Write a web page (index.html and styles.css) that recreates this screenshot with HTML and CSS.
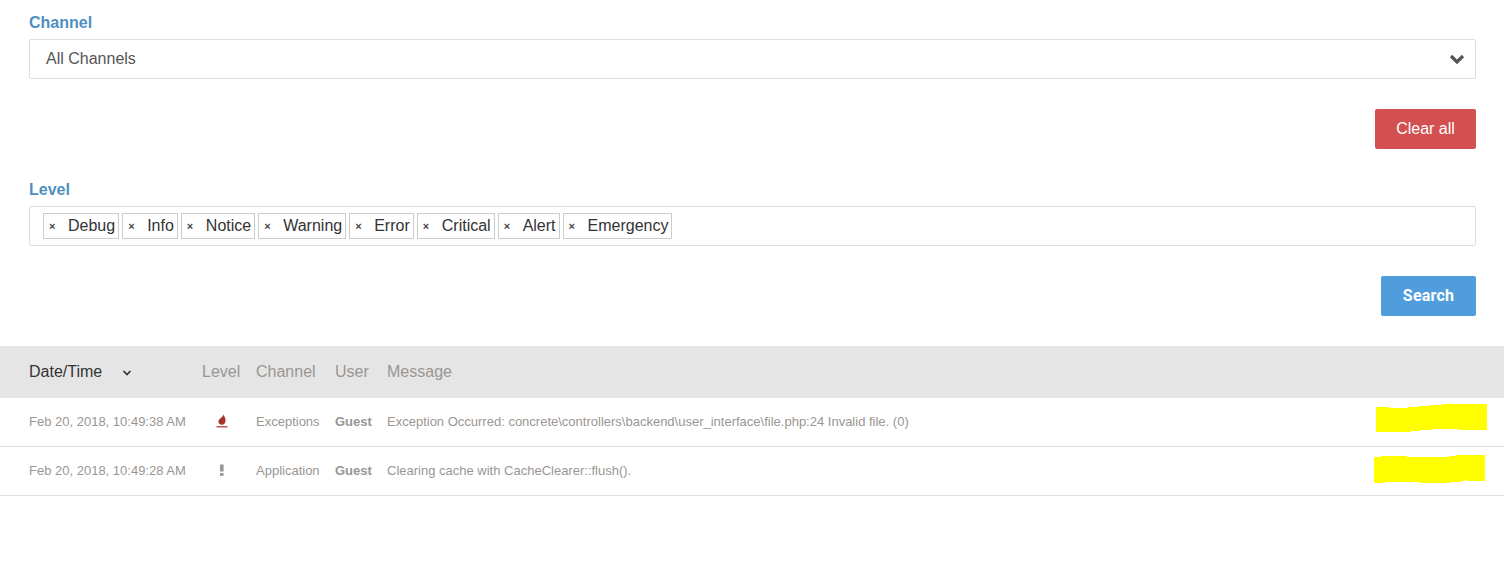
FILE: index.html
```html
<!DOCTYPE html>
<html lang="en">
<head>
    <meta charset="UTF-8">
    <meta name="viewport" content="width=device-width, initial-scale=1.0">
    <title>Logs</title>
    <link rel="stylesheet" href="styles.css">
</head>
<body>
    <div class="filters">
        <div class="field-label">Channel</div>
        <div class="select-box">
            <span>All Channels</span>
            <svg class="select-arrow" width="16" height="12" viewBox="0 0 16 12">
                <path d="M2 3 L8 9 L14 3" fill="none" stroke="#555" stroke-width="3.2"/>
            </svg>
        </div>
        <div class="button-row">
            <button class="btn btn-clear">Clear all</button>
        </div>

        <div class="field-label">Level</div>
        <div class="tag-box">
            <span class="tag"><span class="tag-x">×</span>Debug</span>
            <span class="tag"><span class="tag-x">×</span>Info</span>
            <span class="tag"><span class="tag-x">×</span>Notice</span>
            <span class="tag"><span class="tag-x">×</span>Warning</span>
            <span class="tag"><span class="tag-x">×</span>Error</span>
            <span class="tag"><span class="tag-x">×</span>Critical</span>
            <span class="tag"><span class="tag-x">×</span>Alert</span>
            <span class="tag"><span class="tag-x">×</span>Emergency</span>
        </div>
        <div class="button-row">
            <button class="btn btn-search">Search</button>
        </div>
    </div>

    <div class="log-table">
        <div class="log-row log-head">
            <div class="sort-col">Date/Time
                <svg class="sort-arrow" width="10" height="8" viewBox="0 0 10 8">
                    <path d="M1.5 2 L5 5.5 L8.5 2" fill="none" stroke="#333" stroke-width="1.7"/>
                </svg>
            </div>
            <div>Level</div>
            <div>Channel</div>
            <div>User</div>
            <div>Message</div>
        </div>
        <div class="log-row">
            <div>Feb 20, 2018, 10:49:38 AM</div>
            <div class="level-icon">
                <svg width="12" height="14" viewBox="0 0 12 14">
                    <path d="M7.6 0.5 C7.8 2.4 9.6 3.6 9.6 6.4 C9.6 9 7.9 10.8 5.8 10.8 C3.8 10.8 2.4 9.4 2.4 7.6 C2.4 5.8 3.8 5.2 4.8 4 C5.8 3 7.2 2 7.6 0.5 Z" fill="#a5352c"/>
                    <rect x="0.5" y="12.2" width="11" height="1.2" fill="#a5352c"/>
                </svg>
            </div>
            <div>Exceptions</div>
            <div class="user">Guest</div>
            <div>Exception Occurred: concrete\controllers\backend\user_interface\file.php:24 Invalid file. (0)</div>
            <svg class="scribble" width="112" height="30" viewBox="0 0 112 30">
                <polygon points="0,3 13,3 13,4 32,4 32,3 43,3 43,2 53,2 53,1 67,1 67,0 111,0 111,26 83,26 83,25 56,25 56,26 44,26 44,27 35,27 35,28 0,28" fill="#ffff00"/>
            </svg>
        </div>
        <div class="log-row">
            <div>Feb 20, 2018, 10:49:28 AM</div>
            <div class="level-icon">
                <svg width="6" height="12" viewBox="0 0 6 12">
                    <rect x="1" y="0.5" width="3.6" height="7" fill="#9a9693"/>
                    <rect x="1" y="9" width="3.6" height="2.8" fill="#9a9693"/>
                </svg>
            </div>
            <div>Application</div>
            <div class="user">Guest</div>
            <div>Clearing cache with CacheClearer::flush().</div>
            <svg class="scribble scribble-low" width="112" height="30" viewBox="0 0 112 30">
                <polygon points="0,2 7,2 7,1 33,1 33,2 75,2 75,1 82,1 82,0 111,0 111,26 93,26 93,25 91,25 91,26 87,26 87,27 77,27 77,28 46,28 46,27 11,27 11,28 0,28" fill="#ffff00"/>
            </svg>
        </div>
    </div>
</body>
</html>
```

FILE: styles.css
```css
body {
    margin: 0;
    background-color: #fff;
    font-family: "Liberation Sans", Arial, sans-serif;
    font-size: 16px;
    color: #555;
}

.filters {
    padding: 14px 28px 30px 29px;
}

.field-label {
    color: #4f8fc0;
    font-weight: bold;
    line-height: 18px;
    margin-bottom: 7px;
}

.select-box {
    display: flex;
    justify-content: space-between;
    align-items: center;
    height: 40px;
    box-sizing: border-box;
    padding: 0 10px 0 16px;
    border: 1px solid #dedede;
    border-radius: 2px;
}

.button-row {
    display: flex;
    justify-content: flex-end;
    margin: 30px 0 32px;
}

.btn {
    height: 40px;
    border: none;
    border-radius: 2px;
    color: #fff;
    font-family: inherit;
    font-size: 16px;
    padding: 0;
}

.btn-clear {
    width: 101px;
    background-color: #d35050;
}

.btn-search {
    width: 95px;
    padding-bottom: 2px;
    background-color: #4f9ddc;
    font-family: Roboto, sans-serif;
    font-weight: bold;
    letter-spacing: 0.2px;
}

.tag-box {
    display: flex;
    align-items: center;
    gap: 3px;
    height: 40px;
    box-sizing: border-box;
    padding: 0 13px;
    border: 1px solid #dedede;
    border-radius: 2px;
    color: #333;
}

.tag {
    display: flex;
    align-items: center;
    height: 26px;
    box-sizing: border-box;
    padding: 0 3px 0 5px;
    border: 1px solid #ccc;
}

.tag-x {
    width: 19px;
    font-size: 11px;
    font-weight: bold;
    color: #444;
}

.button-row:last-child {
    margin-bottom: 0;
}

.log-row {
    position: relative;
    display: grid;
    grid-template-columns: 173px 54px 79px 52px 1fr;
    align-items: center;
    height: 49px;
    box-sizing: border-box;
    padding-left: 29px;
    padding-bottom: 2px;
    border-bottom: 1px solid #dedede;
    font-size: 13px;
    color: #9a9693;
}

.log-head {
    height: 52px;
    padding-bottom: 1px;
    background-color: #e5e5e5;
    border-bottom: none;
    font-size: 16px;
}

.sort-col {
    color: #333;
}

.sort-arrow {
    margin-left: 15px;
}

.level-icon {
    display: flex;
    justify-content: center;
    padding-right: 15px;
}

.user {
    font-weight: bold;
}

.scribble {
    position: absolute;
    top: 6px;
    left: 1376px;
}

.scribble-low {
    top: 8px;
    left: 1374px;
}
```
